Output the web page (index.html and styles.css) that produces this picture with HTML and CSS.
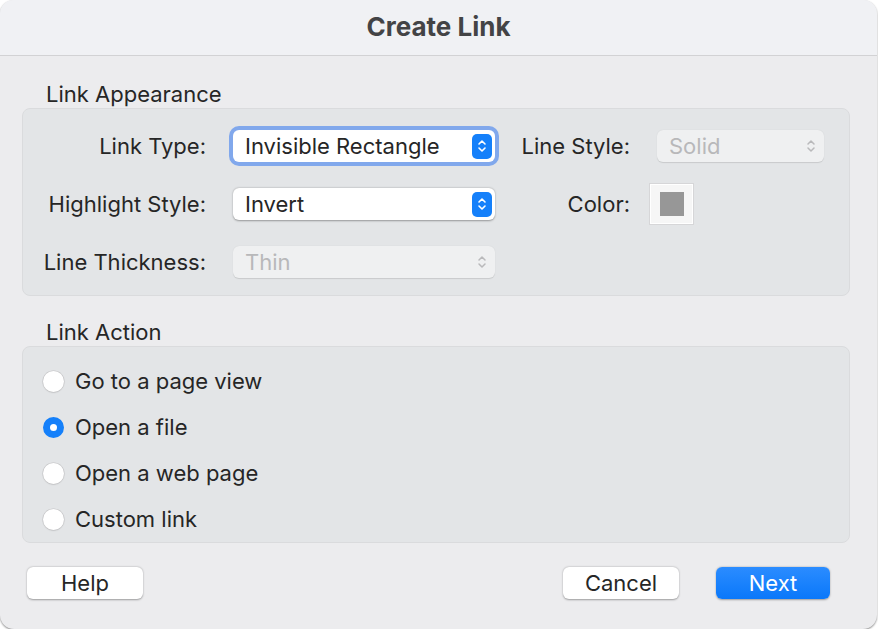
FILE: index.html
```html
<!DOCTYPE html>
<html>
<head>
<meta charset="utf-8">
<link rel="stylesheet" href="styles.css">
</head>
<body>
<div class="window">
  <div class="titlebar">Create Link</div>
  <div class="content">
    <div class="section-title">Link Appearance</div>
    <div class="group appearance">
      <label class="lbl">Link Type:</label>
      <div class="focus-ring">
        <div class="select">
          <span>Invisible Rectangle</span>
          <span class="stepper"><svg width="10" height="14" viewBox="0 0 10 14"><path d="M2 5 L5 2 L8 5 M2 9 L5 12 L8 9" fill="none" stroke="#fff" stroke-width="1.6" stroke-linecap="round" stroke-linejoin="round"/></svg></span>
        </div>
      </div>
      <label class="lbl">Line Style:</label>
      <div class="select disabled">
        <span>Solid</span>
        <span class="stepper"><svg width="10" height="14" viewBox="0 0 10 14"><path d="M2 5 L5 2 L8 5 M2 9 L5 12 L8 9" fill="none" stroke="#b9b9bb" stroke-width="1.5" stroke-linecap="round" stroke-linejoin="round"/></svg></span>
      </div>

      <label class="lbl">Highlight Style:</label>
      <div class="select">
        <span>Invert</span>
        <span class="stepper"><svg width="10" height="14" viewBox="0 0 10 14"><path d="M2 5 L5 2 L8 5 M2 9 L5 12 L8 9" fill="none" stroke="#fff" stroke-width="1.6" stroke-linecap="round" stroke-linejoin="round"/></svg></span>
      </div>
      <label class="lbl">Color:</label>
      <div class="well"><div class="swatch"></div></div>

      <label class="lbl">Line Thickness:</label>
      <div class="select disabled">
        <span>Thin</span>
        <span class="stepper"><svg width="10" height="14" viewBox="0 0 10 14"><path d="M2 5 L5 2 L8 5 M2 9 L5 12 L8 9" fill="none" stroke="#b9b9bb" stroke-width="1.5" stroke-linecap="round" stroke-linejoin="round"/></svg></span>
      </div>
    </div>

    <div class="section-title second">Link Action</div>
    <div class="group action">
      <div class="radio-row"><span class="radio"></span>Go to a page view</div>
      <div class="radio-row"><span class="radio on"></span>Open a file</div>
      <div class="radio-row"><span class="radio"></span>Open a web page</div>
      <div class="radio-row"><span class="radio"></span>Custom link</div>
    </div>

    <div class="buttons">
      <button class="btn">Help</button>
      <div class="spacer"></div>
      <button class="btn">Cancel</button>
      <button class="btn primary">Next</button>
    </div>
  </div>
</div>
</body>
</html>
```

FILE: styles.css
```css
body{
margin:0;
background:#ffffff;
font-family:"Inter","Noto Sans",sans-serif;
color:#262626;
}
.window{
width:877px;
height:629px;
background:#ececee;
border-radius:14px;
box-shadow:0 1px 2px rgba(0,0,0,0.45);
overflow:hidden;
}
.titlebar{
height:56px;
background:#f0f1f4;
border-bottom:1px solid #d2d2d4;
box-sizing:border-box;
text-align:center;
line-height:54px;
font-weight:700;
font-size:26px;
color:#434345;
}
.content{
padding:0 27px 0 22px;
}
.section-title{
font-size:22px;
padding-left:24px;
height:52px;
line-height:76px;
}
.section-title.second{
height:50px;
line-height:72px;
}
.group{
background:#e3e5e7;
border:1px solid #dadbdd;
border-radius:8px;
width:828px;
box-sizing:border-box;
}
.appearance{
display:grid;
grid-template-columns:183px 262px 108px 167px;
grid-auto-rows:36px;
column-gap:27px;
row-gap:22px;
padding:19px 0 15px 0;
align-items:center;
}
.lbl{
font-size:22px;
text-align:right;
white-space:nowrap;
justify-self:end;
}
.select{
height:32px;
background:#ffffff;
border-radius:6px;
box-shadow:0 0.5px 2px rgba(0,0,0,0.35);
display:flex;
align-items:center;
justify-content:space-between;
padding:0 3px 0 12px;
font-size:22px;
box-sizing:border-box;
}
.focus-ring .select{
box-shadow:0 0 0 4px #81a8ec, 0 0.5px 2px rgba(0,0,0,0.35);
}
.stepper{
width:20px;
height:25px;
border-radius:5px;
background:#1580fa;
display:flex;
align-items:center;
justify-content:center;
}
.select.disabled{
background:#eff0f1;
color:#b8b8ba;
box-shadow:0 0.5px 1px rgba(0,0,0,0.12);
}
.select.disabled .stepper{
background:transparent;
}
.well{
width:43px;
height:40px;
margin-left:-7px;
box-sizing:border-box;
background:#f6f6f6;
border:1px solid #ffffff;
box-shadow:0 0 0 1px #d6d6d8;
display:flex;
align-items:center;
justify-content:center;
}
.swatch{
width:24px;
height:24px;
background:#979797;
}
.action{
padding-top:11px;
}
.radio-row{
height:46px;
display:flex;
align-items:center;
padding-left:20px;
font-size:22px;
}
.radio{
width:21px;
height:21px;
border-radius:50%;
background:#ffffff;
box-shadow:0 0 0 0.5px #c4c4c6, 0 0.5px 1.5px rgba(0,0,0,0.2);
margin-right:11px;
box-sizing:border-box;
}
.radio.on{
background:#1580fa;
border:7px solid #1580fa;
box-shadow:none;
}
.radio.on::after{
content:"";
display:block;
width:7px;
height:7px;
border-radius:50%;
background:#ffffff;
}
.buttons{
display:flex;
margin-top:24px;
padding:0 20px 0 5px;
gap:37px;
}
.spacer{
flex:1;
}
.btn{
height:32px;
width:116px;
border:none;
border-radius:6px;
background:#ffffff;
box-shadow:0 0.5px 2px rgba(0,0,0,0.35);
font-family:"Inter","Noto Sans",sans-serif;
font-size:22px;
color:#262626;
padding:0;
}
.btn.primary{
width:114px;
background:linear-gradient(#2b8cff,#0a78fa);
color:#ffffff;
}
```
